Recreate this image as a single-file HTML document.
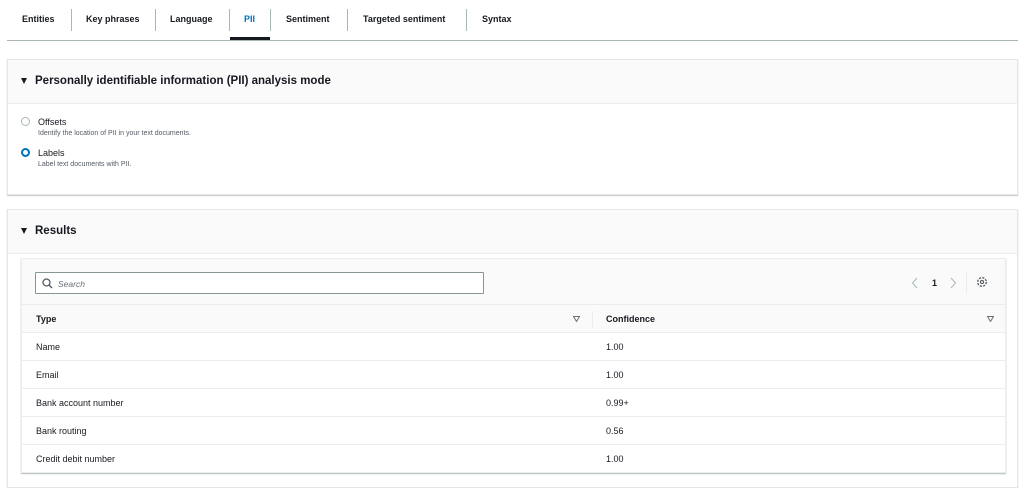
<!DOCTYPE html>
<html><head><style>
*{box-sizing:border-box;margin:0;padding:0}
body{width:1024px;height:488px;background:#fff;font-family:"Liberation Sans",sans-serif;color:#16191f;position:relative;overflow:hidden;font-size:9px}
.abs{position:absolute}
.tab{position:absolute;top:14px;font-size:9px;font-weight:bold;color:#16191f}
.sep{position:absolute;top:9px;width:1px;height:22px;background:#aab7b8}
.panel{position:absolute;left:7px;width:1011px;border:1px solid #e6e6e6;box-shadow:0 1px 1px rgba(0,28,36,.25)}
.ph{height:44px;background:#fafafa;border-bottom:1px solid #eaeded;position:relative}
.ph .t{position:absolute;left:27px;top:15px;font-size:11.5px;font-weight:bold}
.ph .tri{position:absolute;left:13px;top:18px;width:0;height:0;border-left:3.5px solid transparent;border-right:3.5px solid transparent;border-top:6px solid #16191f}
.row{position:absolute;left:0;width:983px;height:28px;border-top:1px solid #eaeded}
.row span{position:absolute;top:9px}
</style></head><body>
<div class="tab" style="left:22px">Entities</div>
<div class="sep" style="left:71px"></div>
<div class="tab" style="left:86px">Key phrases</div>
<div class="sep" style="left:155px"></div>
<div class="tab" style="left:170px">Language</div>
<div class="sep" style="left:229px"></div>
<div class="tab" style="left:244px;color:#0073bb">PII</div>
<div class="abs" style="left:230px;top:37px;width:40px;height:3px;background:#16191f"></div>
<div class="sep" style="left:270px"></div>
<div class="tab" style="left:286px">Sentiment</div>
<div class="sep" style="left:347px"></div>
<div class="tab" style="left:363px">Targeted sentiment</div>
<div class="sep" style="left:466px"></div>
<div class="tab" style="left:482px">Syntax</div>
<div class="abs" style="left:7px;top:40px;width:1011px;height:1px;background:#aab7b8"></div>

<div class="panel" style="top:59px;height:136px">
<div class="ph"><div class="tri"></div><div class="t">Personally identifiable information (PII) analysis mode</div></div>
<div class="abs" style="left:13px;top:57px;width:9px;height:9px;border:1px solid #aab7b8;border-radius:50%"></div>
<div class="abs" style="left:30px;top:57px;font-size:9px">Offsets</div>
<div class="abs" style="left:30px;top:70px;font-size:7px;color:#545b64">Identify the location of PII in your text documents.</div>
<div class="abs" style="left:13px;top:88px;width:9px;height:9px;border:2.5px solid #0073bb;border-radius:50%"></div>
<div class="abs" style="left:30px;top:88px;font-size:9px">Labels</div>
<div class="abs" style="left:30px;top:101px;font-size:7px;color:#545b64">Label text documents with PII.</div>
</div>

<div class="panel" style="top:209px;height:279px">
<div class="ph"><div class="tri"></div><div class="t">Results</div></div>
<div class="abs" style="left:13px;top:48px;width:985px;height:215px;border:1px solid #eaeded;box-shadow:0 1px 1px rgba(0,28,36,.3);background:#fff">
 <div class="abs" style="left:0;top:0;width:983px;height:74px;background:#fafafa"></div>
 <div class="abs" style="left:13px;top:13px;width:449px;height:22px;border:1px solid #879596;background:#fff;border-radius:1px">
  <svg class="abs" style="left:6px;top:5px" width="11" height="11" viewBox="0 0 11 11"><circle cx="4.5" cy="4.5" r="3.5" fill="none" stroke="#545b64" stroke-width="1.3"/><path d="M7 7l3 3" stroke="#545b64" stroke-width="1.4"/></svg>
  <span class="abs" style="left:22px;top:6px;font-style:italic;color:#687078;font-size:8.5px">Search</span>
 </div>
 <svg class="abs" style="left:889px;top:18px" width="8" height="12" viewBox="0 0 8 12"><path d="M6 1L1.5 6 6 11" fill="none" stroke="#aab7b8" stroke-width="1"/></svg>
 <span class="abs" style="left:910px;top:19px;font-weight:bold;font-size:9px">1</span>
 <svg class="abs" style="left:927px;top:18px" width="8" height="12" viewBox="0 0 8 12"><path d="M2 1l4.5 5L2 11" fill="none" stroke="#aab7b8" stroke-width="1"/></svg>
 <div class="abs" style="left:944px;top:12px;width:1px;height:22px;background:#eaeded"></div>
 <svg class="abs" style="left:954px;top:17px" width="12" height="12" viewBox="0 0 12 12"><circle cx="6" cy="6" r="4.3" fill="none" stroke="#545b64" stroke-width="1.3" stroke-dasharray="2.2 1.2"/><circle cx="6" cy="6" r="1.6" fill="none" stroke="#545b64" stroke-width="1.1"/></svg>
 <div class="row" style="top:45px;height:28px;background:#fafafa"><span style="left:14px;font-weight:bold">Type</span>
  <svg class="abs" style="left:551px;top:11px" width="7" height="6" viewBox="0 0 7 6"><path d="M0.5 0.5h6L3.5 5.5z" fill="none" stroke="#687078" stroke-width="1"/></svg>
  <div class="abs" style="left:570px;top:6px;width:1px;height:16px;background:#eaeded"></div>
  <span style="left:584px;font-weight:bold">Confidence</span>
  <svg class="abs" style="left:965px;top:11px" width="7" height="6" viewBox="0 0 7 6"><path d="M0.5 0.5h6L3.5 5.5z" fill="none" stroke="#687078" stroke-width="1"/></svg></div>
 <div class="row" style="top:73px"><span style="left:14px">Name</span><span style="left:584px">1.00</span></div>
 <div class="row" style="top:101px"><span style="left:14px">Email</span><span style="left:584px">1.00</span></div>
 <div class="row" style="top:129px"><span style="left:14px">Bank account number</span><span style="left:584px">0.99+</span></div>
 <div class="row" style="top:157px"><span style="left:14px">Bank routing</span><span style="left:584px">0.56</span></div>
 <div class="row" style="top:185px"><span style="left:14px">Credit debit number</span><span style="left:584px">1.00</span></div>
</div>
</div>
</body></html>
